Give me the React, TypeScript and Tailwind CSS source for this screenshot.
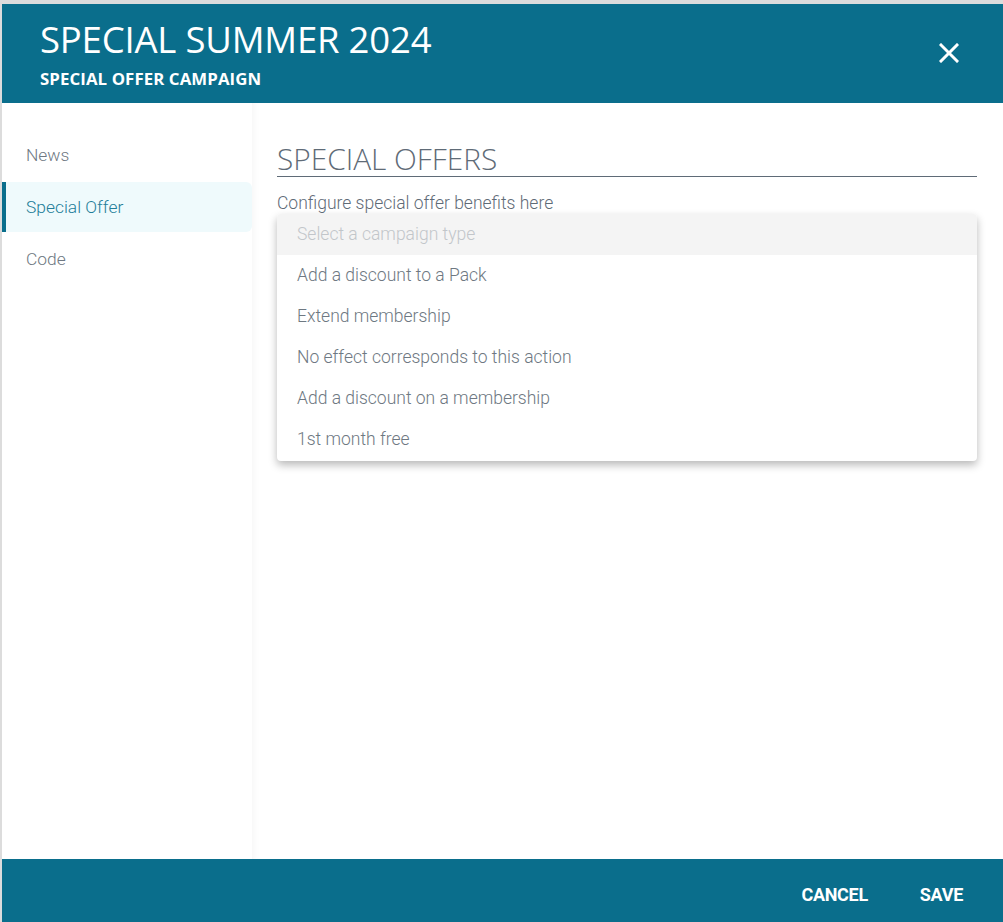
import React from "react";

export default function App() {
  const options = [
    "Add a discount to a Pack",
    "Extend membership",
    "No effect corresponds to this action",
    "Add a discount on a membership",
    "1st month free",
  ];
  return (
    <div className="w-[1003px] h-[922px] bg-[#dcdcdc] pt-[4px] pl-[2px] overflow-hidden">
      <div className="w-[1001px] h-[918px] bg-white flex flex-col">
        <div className="h-[99px] bg-[#0a6e8c] flex items-start justify-between pl-[38px] pr-[44px]" style={{ fontFamily: "'Open Sans', sans-serif" }}>
          <div className="flex flex-col">
            <div className="text-white text-[36.5px] leading-[40px] mt-[15px] font-normal tracking-[-0.2px]">SPECIAL SUMMER 2024</div>
            <div className="text-white text-[16.8px] font-bold mt-[9px] leading-[22px] tracking-[0.1px]">SPECIAL OFFER CAMPAIGN</div>
          </div>
          <svg width="20" height="20" viewBox="0 0 20 20" className="mt-[39px]">
            <path d="M2 2 L18 18 M18 2 L2 18" stroke="white" strokeWidth="3" strokeLinecap="square" />
          </svg>
        </div>
        <div className="flex-1 flex" style={{ fontFamily: "Roboto, sans-serif" }}>
          <div className="w-[250px] pt-[33px] flex flex-col font-light text-[17.4px]">
            <div className="h-[50px] flex items-center pl-[24px] text-[#6e7882] -mt-[6px] mb-[2px]">News</div>
            <div className="h-[50px] flex items-center pl-[20px] border-l-[4px] border-[#0a6e8c] bg-[#effafc] rounded-r-[6px] text-[#237d99]">Special Offer</div>
            <div className="h-[55px] flex items-center pl-[24px] text-[#6e7882]">Code</div>
          </div>
          <div className="flex-1 pl-[25px] pr-[26px] pt-[39px] shadow-[inset_8px_0_10px_-8px_rgba(0,0,0,0.06)]">
            <div className="text-[29.8px] leading-[34px] text-[#5f6b77] font-light border-b border-[#5f6b77] pb-[0px]" style={{ fontFamily: "'Open Sans', sans-serif" }}>SPECIAL OFFERS</div>
            <div className="text-[17.5px] font-light text-[#5f6b77] mt-[15px] leading-[22px]">Configure special offer benefits here</div>
            <div className="rounded-[4px] bg-white shadow-[0_4px_8px_rgba(0,0,0,0.28)] overflow-hidden">
              <div className="h-[41px] bg-[#f4f4f4] flex items-center pl-[20px] text-[17.5px] font-light text-[#c2c6ca]">Select a campaign type</div>
              {options.map((o, i) => (
                <div key={o} className={(i === 4 ? "h-[42px] pb-[1px] " : "h-[41px] ") + "flex items-center pl-[20px] text-[17.5px] font-light text-[#6e7882]"}>{o}</div>
              ))}
            </div>
          </div>
        </div>
        <div className="h-[63px] bg-[#0a6e8c] flex items-center justify-end pr-[40px] pt-[7px] gap-[52px]" style={{ fontFamily: "Roboto, sans-serif" }}>
          <span className="text-white font-bold text-[18px] tracking-[-0.3px]">CANCEL</span>
          <span className="text-white font-bold text-[18px] tracking-[-0.3px]">SAVE</span>
        </div>
      </div>
    </div>
  );
}
